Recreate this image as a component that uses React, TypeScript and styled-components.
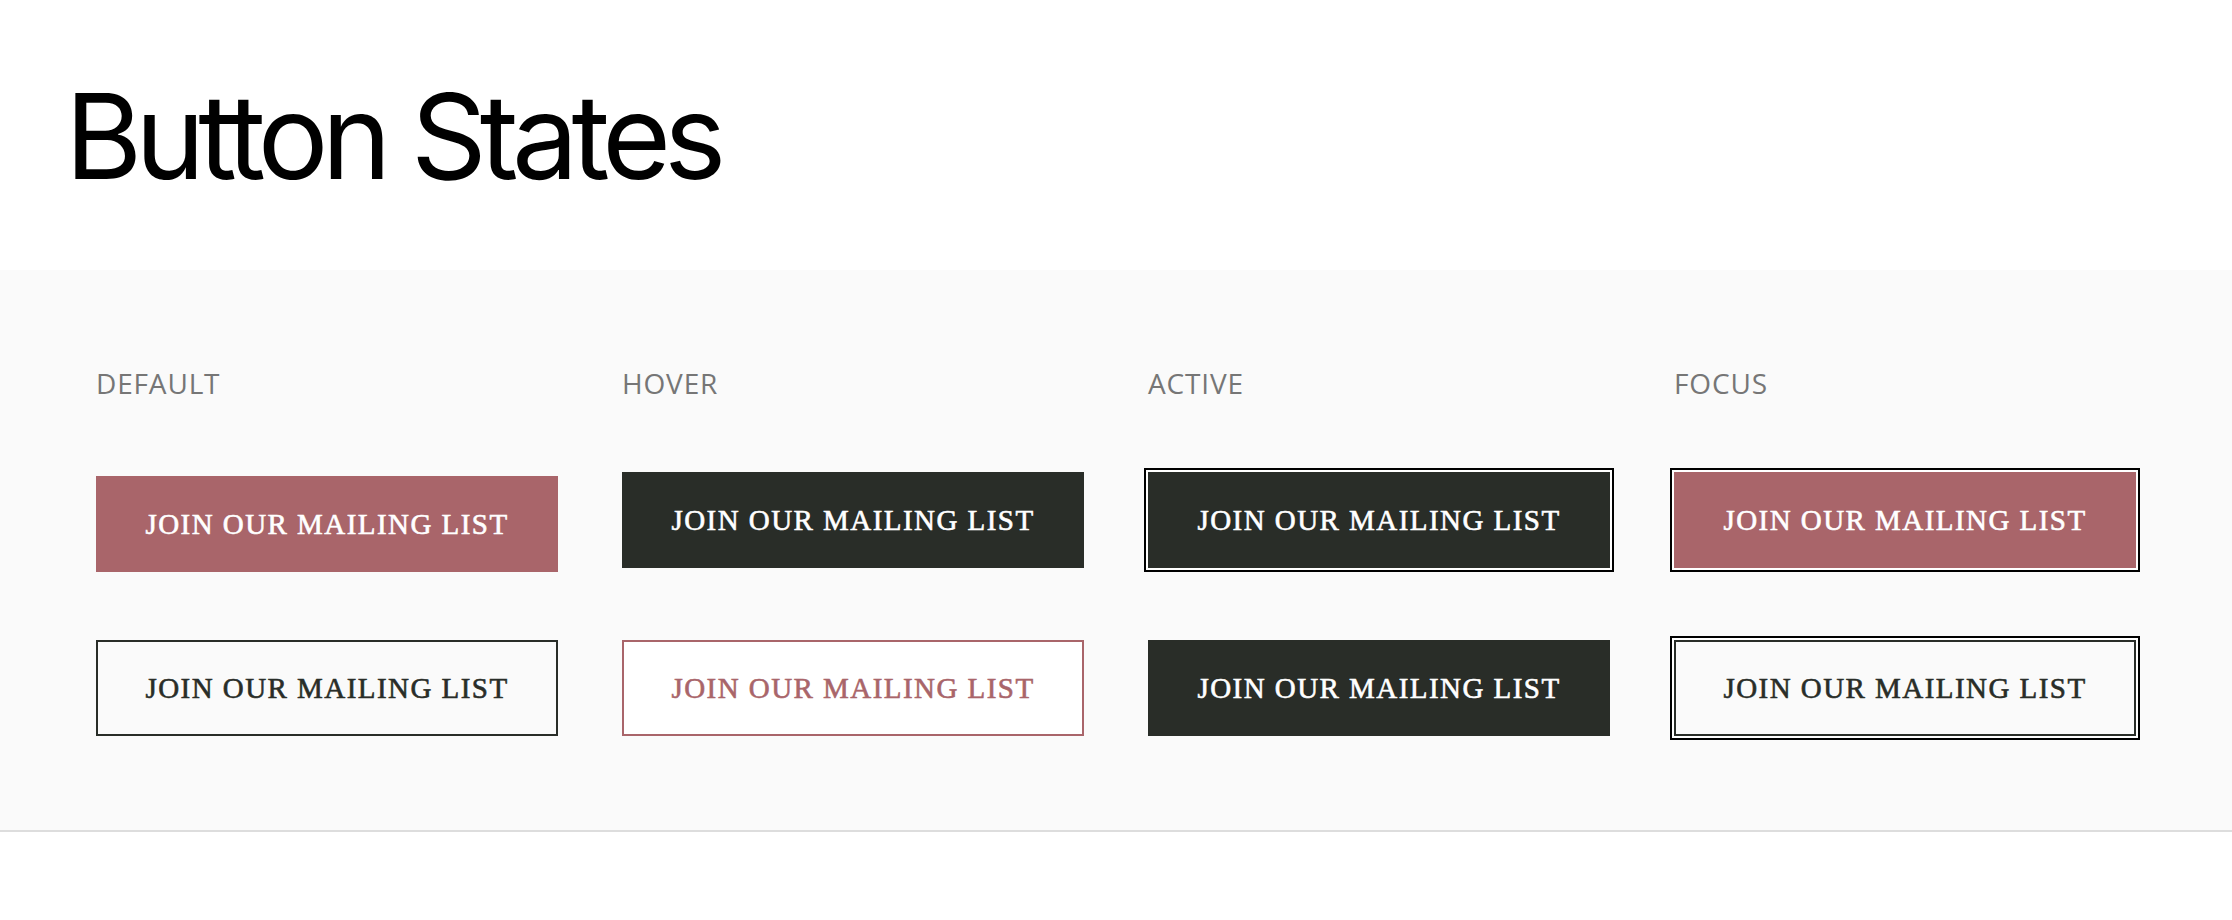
import React from "react";
import styled, { createGlobalStyle, css } from "styled-components";

const PINK = "#a9656a";
const DARK = "#292d28";

const Global = createGlobalStyle`
  html, body { margin: 0; padding: 0; background: #ffffff; }
  body { font-family: "Inter", "Liberation Sans", sans-serif; }
`;

const Page = styled.div`
  display: flex;
  flex-direction: column;
  width: 100%;
`;

const Header = styled.header`
  height: 270px;
  box-sizing: border-box;
  padding: 77px 0 0 65px;
`;

const Title = styled.h1`
  margin: 0;
  font-family: "Inter", "Liberation Sans", sans-serif;
  font-weight: 400;
  font-size: 118px;
  line-height: 118px;
  letter-spacing: -0.058em;
  color: #000;
`;

const Panel = styled.section`
  background: #fafafa;
  border-bottom: 2px solid #dddddd;
  box-sizing: border-box;
  height: 562px;
  padding: 99px 96px 0;
  display: grid;
  grid-template-columns: repeat(4, 1fr);
  column-gap: 64px;
  align-content: start;
`;

const Column = styled.div`
  display: flex;
  flex-direction: column;
`;

const Label = styled.div`
  font-family: "Open Sans", "Noto Sans", sans-serif;
  font-size: 28px;
  line-height: 28px;
  font-weight: 400;
  letter-spacing: 0.03em;
  color: #767676;
  margin-bottom: 79px;
`;

type Variant = "pink" | "dark" | "outline" | "outlinePink";

const Button = styled.button<{ $variant: Variant; $lifted?: boolean; $ring?: boolean; $second?: boolean }>`
  appearance: none;
  box-sizing: border-box;
  width: 100%;
  height: 96px;
  margin: 0;
  padding: 0;
  display: flex;
  align-items: center;
  justify-content: center;
  border: 2px solid transparent;
  border-radius: 0;
  font-family: "Liberation Serif", "DejaVu Serif", serif;
  font-size: 29px;
  font-weight: 400;
  -webkit-text-stroke: 0.6px currentColor;
  letter-spacing: 0.05em;
  text-transform: uppercase;
  cursor: pointer;
  margin-top: ${(p) => (p.$second ? "68px" : "0")};
  ${(p) =>
    p.$variant === "pink" &&
    css`
      background: ${PINK};
      border-color: ${PINK};
      color: #ffffff;
    `}
  ${(p) =>
    p.$variant === "dark" &&
    css`
      background: ${DARK};
      border-color: ${DARK};
      color: #ffffff;
    `}
  ${(p) =>
    p.$variant === "outline" &&
    css`
      background: transparent;
      border-color: ${DARK};
      color: ${DARK};
    `}
  ${(p) =>
    p.$variant === "outlinePink" &&
    css`
      background: #ffffff;
      border-color: ${PINK};
      color: ${PINK};
    `}
  ${(p) => p.$lifted && css`transform: translateY(-4px);`}
  ${(p) => p.$ring && css`box-shadow: 0 0 0 2px #ffffff, 0 0 0 4px #000000;`}
`;

const TEXT = "Join our mailing list";

export default function App() {
  return (
    <Page>
      <Global />
      <Header>
        <Title>Button States</Title>
      </Header>
      <Panel>
        <Column>
          <Label>DEFAULT</Label>
          <Button $variant="pink">{TEXT}</Button>
          <Button $variant="outline" $second>{TEXT}</Button>
        </Column>
        <Column>
          <Label>HOVER</Label>
          <Button $variant="dark" $lifted>{TEXT}</Button>
          <Button $variant="outlinePink" $second>{TEXT}</Button>
        </Column>
        <Column>
          <Label>ACTIVE</Label>
          <Button $variant="dark" $lifted $ring>{TEXT}</Button>
          <Button $variant="dark" $second>{TEXT}</Button>
        </Column>
        <Column>
          <Label>FOCUS</Label>
          <Button $variant="pink" $lifted $ring>{TEXT}</Button>
          <Button $variant="outline" $second $ring>{TEXT}</Button>
        </Column>
      </Panel>
    </Page>
  );
}
